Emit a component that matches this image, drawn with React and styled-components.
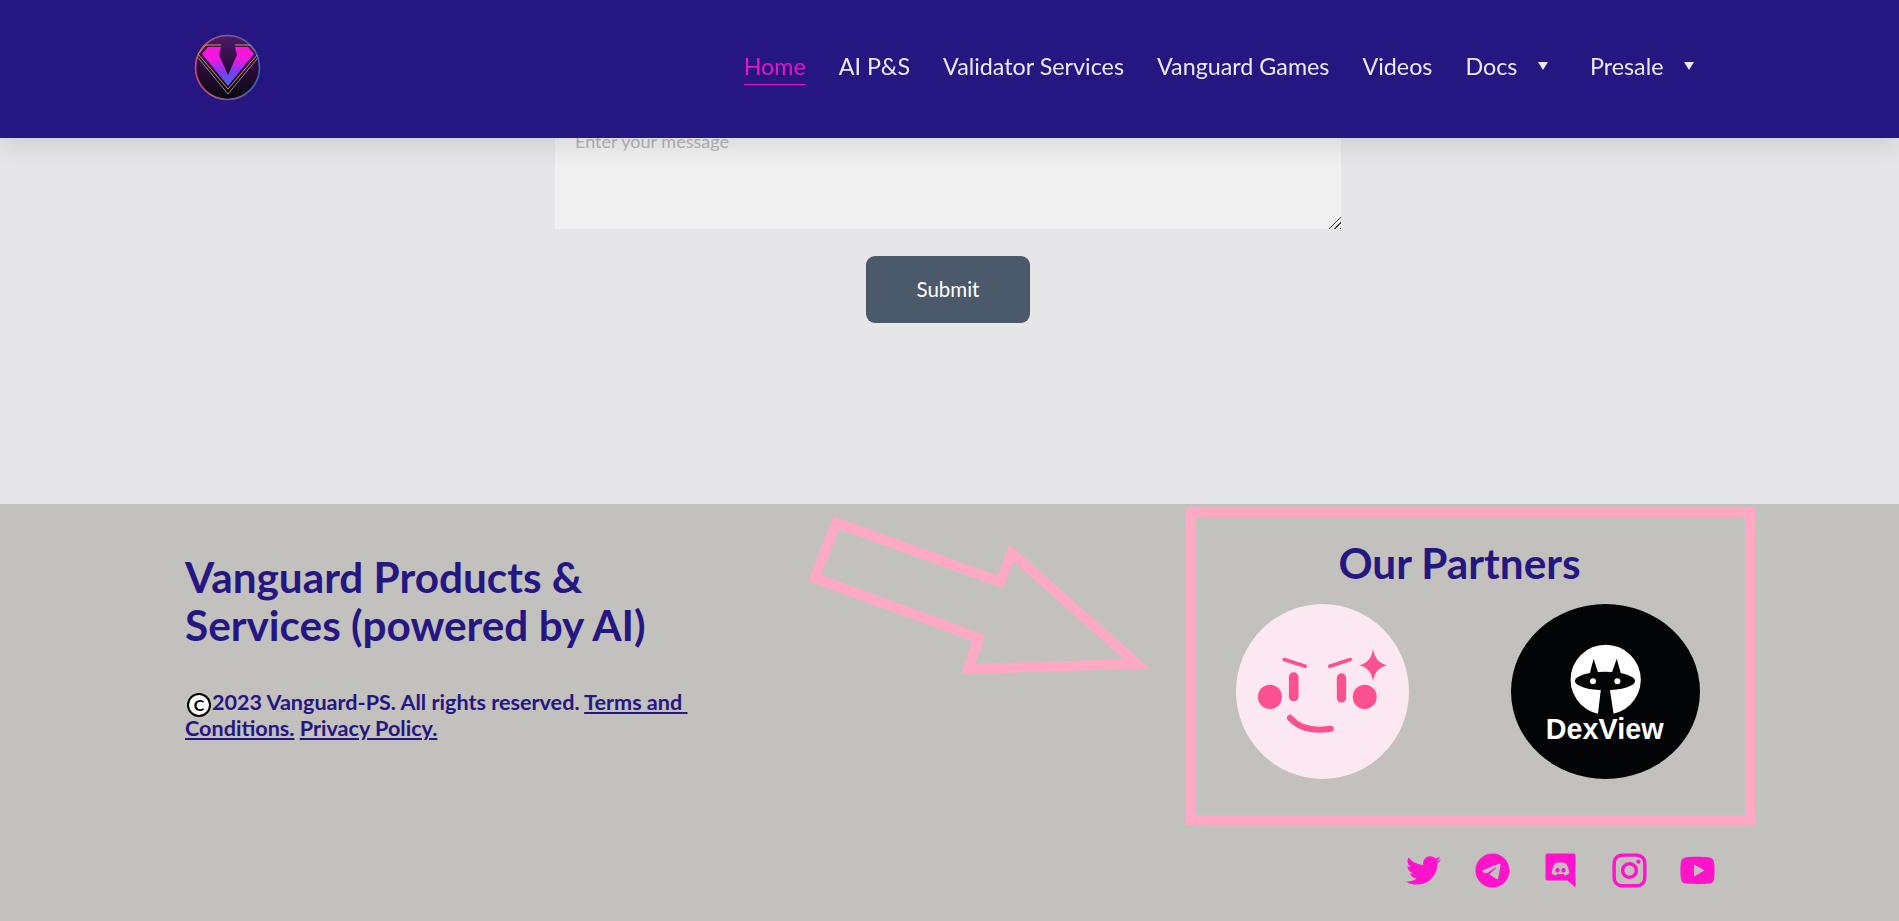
import styled, { createGlobalStyle } from "styled-components";
import {
  RiTwitterFill,
  RiTelegramFill,
  RiInstagramLine,
  RiYoutubeFill,
} from "react-icons/ri";

const font = `"Lato", "Noto Sans", sans-serif`;

const GlobalStyle = createGlobalStyle`
  html, body {
    margin: 0;
    padding: 0;
    height: 100%;
    overflow: hidden;
    font-family: ${font};
  }
  * { box-sizing: border-box; }
`;

const navItems = [
  { name: "Home", current: true },
  { name: "AI P&S" },
  { name: "Validator Services" },
  { name: "Vanguard Games" },
  { name: "Videos" },
  { name: "Docs", caret: true },
  { name: "Presale", caret: true },
];

// the old square discord mark with the tail, the icon packages only have the new one
const DiscordIcon = ({ size }) => (
  <svg width={size} height={size} viewBox="-5.5 -3.5 41 41" fill="currentColor">
    <path
      fillRule="evenodd"
      d="M2 0H28a2 2 0 0 1 2 2V34L22 27H2a2 2 0 0 1-2-2V2a2 2 0 0 1 2-2Z
         M9.5 10c3-1.3 8-1.3 11 0c2 3 3 6.5 3.2 10c-1.5 1.2-3 1.8-4.5 2.1l-1-1.8c-2 .5-4.4 .5-6.4 0l-1 1.8c-1.5-.3-3-.9-4.5-2.1c.2-3.5 1.2-7 3.2-10Z
         M12 14.6a2.2 2.2 0 1 0 .01 0Z
         M18 14.6a2.2 2.2 0 1 0 .01 0Z"
    />
  </svg>
);

const socials = [RiTwitterFill, RiTelegramFill, DiscordIcon, RiInstagramLine, RiYoutubeFill];

const Logo = () => (
  <LogoMark viewBox="0 0 76 76">
    <defs>
      <linearGradient id="ring" x1="0" x2="1" y1="0" y2="0">
        <stop offset="0" stopColor="#d8486e" />
        <stop offset="1" stopColor="#3568b8" />
      </linearGradient>
      <linearGradient id="vee" x1="0" x2="0" y1="0" y2="1">
        <stop offset="0" stopColor="#ff14d8" />
        <stop offset="0.3" stopColor="#f018e0" />
        <stop offset="0.65" stopColor="#7a3cf4" />
        <stop offset="1" stopColor="#4a68e0" />
      </linearGradient>
      <linearGradient id="disc" x1="0" x2="0" y1="0" y2="1">
        <stop offset="0" stopColor="#4a1a68" />
        <stop offset="0.5" stopColor="#2c0a3a" />
        <stop offset="1" stopColor="#08080e" />
      </linearGradient>
      <clipPath id="discClip">
        <circle cx="37.5" cy="37.5" r="32" />
      </clipPath>
    </defs>
    <circle cx="37.5" cy="37.5" r="32" fill="url(#disc)" stroke="url(#ring)" strokeWidth="1.6" />
    <g clipPath="url(#discClip)">
      <path d="M5 24 L38 64 L71 24" fill="none" stroke="#8a8a90" strokeWidth="1" />
      <path d="M8 24 L16 15 H31 M45 15 H60 L68 24 L38 59 L8 24" fill="none" stroke="#e9a23a" strokeWidth="0.9" />
      <path
        d="M12 24 L18 17 H31 L29 25 L38 45 L47 25 L45 17 H58 L64 24 L38 56 Z"
        fill="url(#vee)"
      />
    </g>
  </LogoMark>
);

const Arrow = () => (
  <ArrowMark viewBox="800 500 350 190">
    <polygon
      points="836.3,522.7 1000.3,582 1011.7,553 1137,664 968.3,669 978.7,638 814.7,578"
      fill="none"
      stroke="#ffa9c5"
      strokeWidth="10"
    />
  </ArrowMark>
);

const FaceLogo = () => (
  <PartnerMark $width={173} viewBox="50 45 520 520" preserveAspectRatio="none">
    <ellipse cx="310" cy="305" rx="260" ry="260" fill="#fce8f0" />
    <g stroke="#fb5190" strokeLinecap="round" fill="none">
      <path d="M195 210 L258 230" strokeWidth="11" />
      <path d="M332 230 L393 210" strokeWidth="11" />
      <path d="M212 383 Q250 428 335 416" strokeWidth="18" />
    </g>
    <g fill="#fb5190">
      <rect x="209" y="248" width="29" height="86" rx="14" />
      <rect x="353" y="251" width="28" height="87" rx="14" />
      <circle cx="152" cy="321" r="36" />
      <circle cx="437" cy="321" r="36" />
      <path d="M462 178 Q468 220 505 227 Q468 234 462 275 Q456 234 420 227 Q456 220 462 178 Z" />
    </g>
  </PartnerMark>
);

const DexLogo = () => (
  <PartnerMark $width={189} viewBox="37 42 565 525" preserveAspectRatio="none">
    <ellipse cx="319.5" cy="304.5" rx="282.5" ry="262.5" fill="#030405" />
    <circle cx="320" cy="269" r="105" fill="#fff" />
    <ellipse cx="318" cy="273" rx="90" ry="28" fill="#030405" />
    <path d="M272 252 L284 206 L298 250 Z M338 250 L353 206 L366 252 Z" fill="#030405" />
    <path d="M306 295 L296 380 L345 380 L332 295 Z" fill="#030405" />
    <circle cx="282" cy="274" r="9" fill="#fff" />
    <circle cx="355" cy="274" r="9" fill="#fff" />
    <DexText x="317" y="448" textAnchor="middle">DexView</DexText>
  </PartnerMark>
);

export default function App() {
  return (
    <Page>
      <GlobalStyle />
      <Header>
        <Logo />
        <Nav>
          {navItems.map((item) => (
            <NavItem key={item.name} $caret={item.caret}>
              <NavLink $current={item.current}>{item.name}</NavLink>
              {item.caret && <Caret />}
            </NavItem>
          ))}
        </Nav>
      </Header>

      <Main>
        <Message placeholder="Enter your message" />
        <Submit>Submit</Submit>
      </Main>

      <Footer>
        <Brand>
          <BrandTitle>Vanguard Products &amp; Services (powered by AI)</BrandTitle>
          <Copy>
            <CopyMark>C</CopyMark>2023 Vanguard-PS. All rights reserved.{" "}
            <FootLink>
              Terms and{"\u00a0"}
              <wbr />
              Conditions.
            </FootLink>{" "}
            <FootLink>Privacy Policy.</FootLink>
          </Copy>
        </Brand>
        <Arrow />
        <Partners>
          <PartnersTitle>Our Partners</PartnersTitle>
          <PartnerRow>
            <FaceLogo />
            <DexLogo />
          </PartnerRow>
        </Partners>
        <Socials>
          {socials.map((Icon, i) => (
            <Social key={i}>
              <Icon size={41} />
            </Social>
          ))}
        </Socials>
      </Footer>
    </Page>
  );
}

const Page = styled.div`
  display: flex;
  flex-direction: column;
  height: 100vh;
  overflow: hidden;
`;

const Header = styled.header`
  position: fixed;
  top: 0;
  left: 0;
  right: 0;
  z-index: 10;
  height: 138px;
  padding: 0 196px 0 190px;
  display: flex;
  align-items: center;
  justify-content: space-between;
  background-color: #261681;
  box-shadow: 0 8px 24px rgba(0, 0, 0, 0.1);
`;

const LogoMark = styled.svg`
  width: 76px;
  height: 76px;
  margin-bottom: 2px;
`;

const Nav = styled.nav`
  display: flex;
  align-items: center;
  gap: 33px;
  margin-bottom: 6px;
`;

const NavItem = styled.div`
  display: flex;
  align-items: center;
  gap: 20.5px;
  margin-right: ${({ $caret }) => ($caret ? "9px" : 0)};
`;

const NavLink = styled.a`
  padding-bottom: 4px;
  margin-top: 5px;
  font-size: 23.3px;
  line-height: 28px;
  color: ${({ $current }) => ($current ? "#e614c8" : "#ebe9f6")};
  border-bottom: 1px solid ${({ $current }) => ($current ? "#e614c8" : "transparent")};
`;

const Caret = styled.span`
  width: 0;
  height: 0;
  border-left: 5.5px solid transparent;
  border-right: 5.5px solid transparent;
  border-top: 8px solid #ebe9f6;
`;

const Main = styled.main`
  height: 504px;
  flex-shrink: 0;
  padding-top: 120px;
  display: flex;
  flex-direction: column;
  align-items: center;
  gap: 27px;
  background-color: #e6e6e8;
`;

const Message = styled.textarea`
  display: block;
  width: 786px;
  height: 109px;
  margin-right: 3px;
  padding: 9px 20px;
  border: none;
  outline: none;
  background-color: #f0f0f0;
  font-family: ${font};
  font-size: 18px;
  line-height: 24px;

  &::placeholder {
    color: #b4b4b4;
  }

  &::-webkit-resizer {
    background:
      linear-gradient(135deg, #f0f0f0 50%, transparent 50%),
      repeating-linear-gradient(-45deg, #444 0 1px, transparent 1px 4px);
  }
`;

const Submit = styled.button`
  width: 164px;
  height: 67px;
  margin-right: 3px;
  padding-bottom: 2px;
  border: none;
  border-radius: 9px;
  background-color: #4a5a6a;
  color: #fff;
  font-family: ${font};
  font-size: 20.5px;
`;

const Footer = styled.footer`
  flex: 1;
  display: grid;
  grid-template-columns: 615px 386px 569px;
  grid-template-rows: 318px auto;
  align-content: start;
  padding: 3px 0 0 185px;
  background-color: #c2c1bd;
`;

const Brand = styled.div`
  padding-top: 46px;
  width: 510px;
  color: #251682;
`;

const BrandTitle = styled.h2`
  margin: 0 0 40px;
  font-size: 42.3px;
  line-height: 48px;
  font-weight: 700;
`;

const Copy = styled.p`
  margin: 0;
  font-size: 21.6px;
  line-height: 26px;
  font-weight: 700;
`;

const CopyMark = styled.span`
  display: inline-flex;
  align-items: center;
  justify-content: center;
  width: 24px;
  height: 24px;
  margin: -4px 1px -4px 2px;
  vertical-align: -1px;
  border: 2.5px solid #000;
  border-radius: 50%;
  background-color: #fff;
  color: #000;
  font-size: 16px;
`;

const FootLink = styled.a`
  text-decoration: underline;
`;

const ArrowMark = styled.svg`
  display: block;
  width: 350px;
  height: 190px;
  margin-top: -7px;
`;

const Partners = styled.section`
  height: 318px;
  border: 10px solid #ffa9c5;
  padding: 22px 0 0 40px;
`;

const PartnersTitle = styled.h3`
  margin: 0 0 17px;
  padding-right: 62px;
  text-align: center;
  font-size: 42.3px;
  line-height: 48px;
  font-weight: 700;
  color: #251682;
`;

const PartnerRow = styled.div`
  display: flex;
  gap: 102px;
`;

const PartnerMark = styled.svg`
  display: block;
  width: ${({ $width }) => $width}px;
  height: 175px;
`;

const DexText = styled.text`
  font-family: "Liberation Sans", sans-serif;
  font-size: 86px;
  font-weight: 700;
  fill: #fff;
`;

const Socials = styled.div`
  grid-column: 3;
  display: flex;
  justify-content: flex-end;
  gap: 27.5px;
  padding: 25px 37px 0 0;
`;

const Social = styled.a`
  display: flex;
  color: #ff14cc;
`;
